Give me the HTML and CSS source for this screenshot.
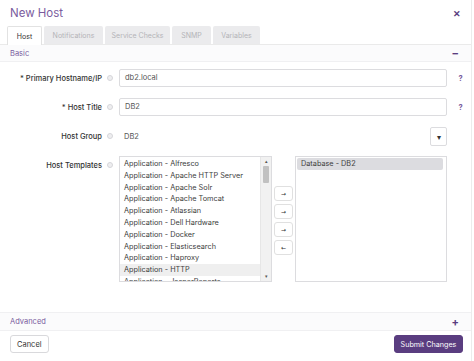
FILE: index.html
```html
<!DOCTYPE html>
<html lang="en">
<head>
  <meta charset="UTF-8" />
  <title>New Host</title>
  <link rel="stylesheet" href="styles.css">
</head>
<body>
<div class="modal">
  <header class="modal-head">
    <h1>New Host</h1>
    <span class="close">&#10005;</span>
  </header>

  <nav class="tabs">
    <span class="tab active">Host</span>
    <span class="tab w-notif">Notifications</span>
    <span class="tab w-checks">Service Checks</span>
    <span class="tab w-snmp">SNMP</span>
    <span class="tab w-vars">Variables</span>
  </nav>

  <div class="section-head">
    <span>Basic</span>
    <span class="toggle">&minus;</span>
  </div>

  <div class="form">
    <div class="row">
      <label class="label">* Primary Hostname/IP <i class="info"></i></label>
      <div class="input">db2.local</div>
      <span class="help">?</span>
    </div>
    <div class="row">
      <label class="label">* Host Title <i class="info"></i></label>
      <div class="input">DB2</div>
      <span class="help">?</span>
    </div>
    <div class="row">
      <label class="label">Host Group <i class="info"></i></label>
      <div class="select">
        <span>DB2</span>
        <span class="caret">&#9662;</span>
      </div>
    </div>
    <div class="row tall">
      <label class="label top">Host Templates <i class="info"></i></label>
      <div class="dual">
        <div class="listbox left">
          <ul>
            <li>Application - Alfresco</li>
            <li>Application - Apache HTTP Server</li>
            <li>Application - Apache Solr</li>
            <li>Application - Apache Tomcat</li>
            <li>Application - Atlassian</li>
            <li>Application - Dell Hardware</li>
            <li>Application - Docker</li>
            <li>Application - Elasticsearch</li>
            <li>Application - Haproxy</li>
            <li class="hl">Application - HTTP</li>
            <li>Application - JasperReports</li>
          </ul>
          <div class="scroll">
            <span class="arrow">&#9652;</span>
            <span class="thumb"></span>
            <span class="arrow down">&#9662;</span>
          </div>
        </div>
        <div class="moves">
          <button class="move">&#8594;</button>
          <button class="move">&#8594;</button>
          <button class="move">&#8594;</button>
          <button class="move">&#8592;</button>
        </div>
        <div class="listbox right">
          <ul>
            <li class="sel">Database - DB2</li>
          </ul>
        </div>
      </div>
    </div>
  </div>

  <div class="section-head advanced">
    <span>Advanced</span>
    <span class="toggle">+</span>
  </div>

  <footer class="modal-foot">
    <button class="btn">Cancel</button>
    <button class="btn primary">Submit Changes</button>
  </footer>
</div>
</body>
</html>
```

FILE: styles.css
```css
:root {
  --roxo: #7a5c9e;
  --roxo-escuro: #5a3d80;
  --borda: #dcdcdf;
  --texto: #4a4a4a;
}

body {
  margin: 0;
  background: #fff;
  font-family: Inter, 'Noto Sans', sans-serif;
  color: var(--texto);
}

.modal {
  width: 471px;
  height: 361px;
  border-right: 1px solid #ececec;
  display: flex;
  flex-direction: column;
}

.modal-head {
  height: 26px;
  display: flex;
  align-items: center;
  justify-content: space-between;
  padding: 0 10px 0 10px;
}

.modal-head h1 {
  margin: 0;
  font-size: 11.5px;
  font-weight: 400;
  color: var(--roxo);
}

.close {
  font-size: 9px;
  font-weight: 700;
  color: var(--roxo-escuro);
}

.tabs {
  display: flex;
  gap: 2px;
  padding-left: 7px;
  height: 18px;
  border-bottom: 1px solid #eaeaea;
}

.tab {
  display: flex;
  align-items: center;
  justify-content: center;
  font-size: 7px;
  white-space: nowrap;
  color: #b4b4b8;
  background: #ebebed;
  border-radius: 2px 2px 0 0;
}

.w-notif { width: 59px; }
.w-checks { width: 65px; }
.w-snmp { width: 39px; }
.w-vars { width: 47px; }

.tab.active {
  background: #fff;
  color: #333;
  border: 1px solid #e2e2e2;
  border-bottom: none;
  width: 33px;
  height: 19px;
}

.section-head {
  height: 16px;
  display: flex;
  align-items: center;
  justify-content: space-between;
  padding: 0 12px 0 10px;
  font-size: 7.5px;
  color: var(--roxo);
  background: #fbfbfc;
  border-bottom: 1px solid #f0f0f2;
}

.section-head .toggle {
  font-size: 11px;
  font-weight: 700;
  color: var(--roxo-escuro);
}

.form {
  padding-top: 7px;
  display: flex;
  flex-direction: column;
  gap: 11px;
}

.row {
  display: grid;
  grid-template-columns: 119px 328px 27px;
  align-items: center;
  height: 18px;
}

.row.tall {
  height: 126px;
  align-items: start;
}

.label {
  text-align: right;
  padding-right: 6px;
  font-size: 7.5px;
  font-weight: 500;
  color: #333;
  white-space: nowrap;
}

.label.top {
  padding-top: 5px;
}

.info {
  display: inline-block;
  width: 4px;
  height: 4px;
  border: 1px solid #d6d6da;
  background: #eeeef0;
  border-radius: 50%;
  margin-left: 3px;
  vertical-align: 0;
}

.input {
  height: 18px;
  box-sizing: border-box;
  border: 1px solid var(--borda);
  border-radius: 2px;
  padding: 0 5px;
  font-size: 7.5px;
  line-height: 16px;
  color: #555;
}

.help {
  text-align: center;
  font-size: 7.5px;
  font-weight: 700;
  color: var(--roxo);
}

.select {
  height: 19px;
  display: flex;
  align-items: center;
  justify-content: space-between;
  padding-left: 5px;
  font-size: 7.5px;
  color: #555;
}

.caret {
  width: 17px;
  height: 19px;
  box-sizing: border-box;
  border: 1px solid var(--borda);
  border-radius: 2px;
  display: flex;
  align-items: center;
  justify-content: center;
  font-size: 8px;
  color: #333;
}

.dual {
  display: flex;
  height: 126px;
}

.listbox {
  box-sizing: border-box;
  border: 1px solid var(--borda);
  height: 126px;
  display: flex;
  overflow: hidden;
}

.listbox.left {
  width: 153px;
}

.listbox.right {
  width: 152px;
}

.listbox ul {
  list-style: none;
  margin: 0;
  padding: 1px 0 0 0;
  flex: 1;
}

.listbox li {
  height: 11.8px;
  line-height: 11.8px;
  font-size: 7.3px;
  padding-left: 4px;
  color: #3d3d3d;
  white-space: nowrap;
}

.listbox li.hl {
  background: #efefef;
}

.listbox li.sel {
  background: #dcdce0;
  margin: 0 3px 0 1px;
  border-radius: 2px;
}

.scroll {
  width: 10px;
  background: #f1f1f1;
  border-left: 1px solid #e6e6e6;
  display: flex;
  flex-direction: column;
  align-items: center;
}

.scroll .arrow {
  font-size: 5px;
  line-height: 9px;
  color: #555;
}

.scroll .arrow.down {
  margin-top: auto;
}

.scroll .thumb {
  width: 6px;
  height: 17px;
  background: #c1c1c1;
  border-radius: 1px;
}

.moves {
  width: 23px;
  padding-top: 30px;
  display: flex;
  flex-direction: column;
  align-items: center;
  gap: 3px;
}

.move {
  width: 19px;
  height: 15px;
  padding: 0;
  border: 1px solid #e0e0e0;
  border-radius: 3px;
  background: #fff;
  font-size: 6px;
  color: #333;
  font-family: 'DejaVu Sans', sans-serif;
}

.advanced {
  margin-top: 30px;
  border-top: 1px solid #f0f0f2;
  height: 17px;
}

.modal-foot {
  display: flex;
  justify-content: space-between;
  padding: 4px 8px 0 10px;
}

.btn {
  height: 18px;
  padding: 0 6px;
  border: 1px solid #d9d9dc;
  border-radius: 3px;
  background: #fff;
  font-family: Inter, sans-serif;
  font-size: 7.5px;
  color: #333;
}

.btn.primary {
  width: 69px;
  padding: 0;
  background: var(--roxo-escuro);
  border-color: var(--roxo-escuro);
  color: #fff;
  font-size: 7.2px;
}
```
